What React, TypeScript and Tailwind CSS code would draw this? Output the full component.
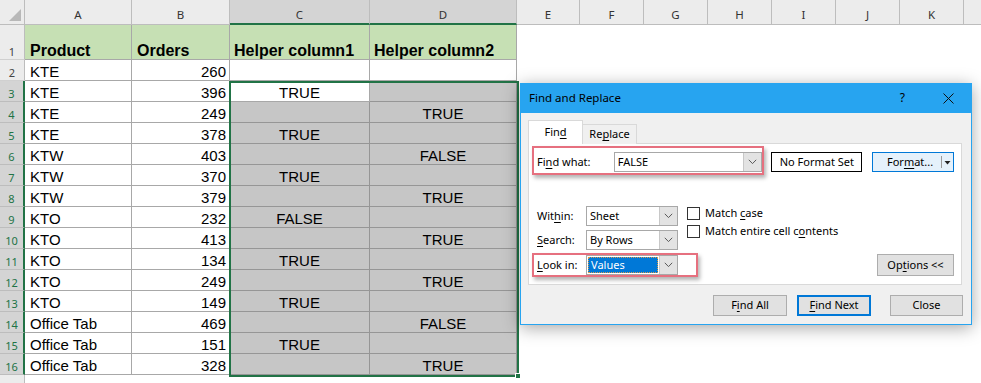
import React from 'react';

type RowData = {
  product: string;
  orders: string;
  h1: string;
  h2: string;
};

const rows: RowData[] = [
  { product: 'KTE', orders: '260', h1: '', h2: '' },
  { product: 'KTE', orders: '396', h1: 'TRUE', h2: '' },
  { product: 'KTE', orders: '249', h1: '', h2: 'TRUE' },
  { product: 'KTE', orders: '378', h1: 'TRUE', h2: '' },
  { product: 'KTW', orders: '403', h1: '', h2: 'FALSE' },
  { product: 'KTW', orders: '370', h1: 'TRUE', h2: '' },
  { product: 'KTW', orders: '379', h1: '', h2: 'TRUE' },
  { product: 'KTO', orders: '232', h1: 'FALSE', h2: '' },
  { product: 'KTO', orders: '413', h1: '', h2: 'TRUE' },
  { product: 'KTO', orders: '134', h1: 'TRUE', h2: '' },
  { product: 'KTO', orders: '249', h1: '', h2: 'TRUE' },
  { product: 'KTO', orders: '149', h1: 'TRUE', h2: '' },
  { product: 'Office Tab', orders: '469', h1: '', h2: 'FALSE' },
  { product: 'Office Tab', orders: '151', h1: 'TRUE', h2: '' },
  { product: 'Office Tab', orders: '328', h1: '', h2: 'TRUE' },
];

const colHeads = [
  { label: 'A', w: 'w-[107px]', sel: false },
  { label: 'B', w: 'w-[98px]', sel: false },
  { label: 'C', w: 'w-[140px]', sel: true },
  { label: 'D', w: 'w-[147px]', sel: true },
  { label: 'E', w: 'w-[63px]', sel: false },
  { label: 'F', w: 'w-[64px]', sel: false },
  { label: 'G', w: 'w-[64px]', sel: false },
  { label: 'H', w: 'w-[64px]', sel: false },
  { label: 'I', w: 'w-[64px]', sel: false },
  { label: 'J', w: 'w-[64px]', sel: false },
  { label: 'K', w: 'w-[64px]', sel: false },
];

const Key = ({ children }: { children: React.ReactNode }) => (
  <span className="underline underline-offset-[2px] decoration-1">{children}</span>
);

const RowHead = ({ n, sel }: { n: number | string; sel: boolean }) => (
  <div
    className={
      sel
        ? 'w-[25px] shrink-0 bg-[#d4d4d4] border-r-2 border-r-[#217346] border-b border-b-[#bdbdbd] text-center text-[#217346] text-[11px] leading-[25px] font-["Noto_Sans",sans-serif]'
        : 'w-[25px] shrink-0 bg-[#ececec] border-r border-r-[#bdbdbd] border-b border-b-[#d0d0d0] text-center text-[#444] text-[11px] leading-[25px] font-["Noto_Sans",sans-serif]'
    }
  >
    {n}
  </div>
);

const Chevron = () => (
  <svg width="9" height="6" viewBox="0 0 9 6">
    <polyline points="0.8,0.8 4.5,4.6 8.2,0.8" fill="none" stroke="#5a5a5a" strokeWidth="1" />
  </svg>
);

const Combo = ({ w, children }: { w: string; children: React.ReactNode }) => (
  <div className={`flex h-[20px] border border-[#a8a8a8] bg-white ${w}`}>
    <div className="flex-1 flex items-center min-w-0">{children}</div>
    <div className="w-[18px] bg-[#e3e3e3] border-l border-[#c8c8c8] flex items-center justify-center">
      <Chevron />
    </div>
  </div>
);

const Check = ({ children }: { children: React.ReactNode }) => (
  <div className="flex items-center h-[18px]">
    <div className="w-[13px] h-[13px] border border-[#333] bg-white" />
    <span className="ml-[5px]">{children}</span>
  </div>
);

const Btn = ({ w, children, focus }: { w: string; children: React.ReactNode; focus?: boolean }) => (
  <div
    className={
      focus
        ? `${w} h-[21px] bg-[#e1e1e1] border-2 border-[#0078d7] flex items-center justify-center`
        : `${w} h-[21px] bg-[#e1e1e1] border border-[#adadad] flex items-center justify-center`
    }
  >
    {children}
  </div>
);

function FindReplaceDialog() {
  return (
    <div className="absolute left-[520px] top-[83px] w-[452px] h-[242px] flex flex-col shadow-[0_3px_16px_rgba(0,0,0,0.35)] font-['Noto_Sans',sans-serif] text-[11px] text-black">
      {/* Title bar */}
      <div className="h-[30px] bg-[#27a4f0] flex items-center pl-[9px] pr-[18px]">
        <span className="text-[11.5px]">Find and Replace</span>
        <span className="ml-auto text-[12px] mr-[38px]">?</span>
        <svg width="11" height="11" viewBox="0 0 11 11">
          <path d="M0.5 0.5 L10.5 10.5 M10.5 0.5 L0.5 10.5" stroke="#111" strokeWidth="1" />
        </svg>
      </div>

      <div className="flex-1 bg-[#f0f0f0] border-x border-b border-[#27a4f0] px-[7px] pt-[8px]">
        {/* Tabs */}
        <div className="flex items-end h-[23px] relative z-10 -mb-px">
          <div className="w-[55px] h-[24px] bg-white border border-b-0 border-[#d9d9d9] flex items-center justify-center pb-[1px]">
            Fin<Key>d</Key>
          </div>
          <div className="w-[54px] h-[20px] bg-[#f0f0f0] border border-l-0 border-b-0 border-[#d9d9d9] flex items-center justify-center">
            Re<Key>p</Key>lace
          </div>
        </div>

        {/* Panel */}
        <div className="w-[434px] h-[142px] bg-white border border-[#d9d9d9] pl-[8px] pt-[8px] pr-[7px]">
          <div className="flex items-center h-[20px]">
            <div className="w-[77px]">
              Fi<Key>n</Key>d what:
            </div>
            <Combo w="w-[149px]">
              <span className="pl-[3px]">FALSE</span>
            </Combo>
            <div className="ml-[9px] w-[91px] h-[20px] border border-black bg-white flex items-center justify-center">
              No Format Set
            </div>
            <div className="ml-[10px] w-[82px] h-[20px] border border-[#0078d7] bg-[#e5f1fb] flex items-center">
              <span className="flex-1 text-center pl-[6px]">
                For<Key>m</Key>at...
              </span>
              <div className="w-px h-[12px] bg-[#9a9a9a]" />
              <svg width="9" height="9" viewBox="0 0 9 9" className="mx-[1px]">
                <polygon points="1.5,3 7.5,3 4.5,6.5" fill="#222" />
              </svg>
            </div>
          </div>

          <div className="flex items-end mt-[34px]">
            <div className="flex flex-col">
              <div className="flex items-center h-[20px]">
                <div className="w-[49px]">
                  Wit<Key>h</Key>in:
                </div>
                <Combo w="w-[92px]">
                  <span className="pl-[3px]">Sheet</span>
                </Combo>
              </div>
              <div className="flex items-center h-[20px] mt-[4px]">
                <div className="w-[49px]">
                  <Key>S</Key>earch:
                </div>
                <Combo w="w-[92px]">
                  <span className="pl-[3px]">By Rows</span>
                </Combo>
              </div>
              <div className="flex items-center h-[20px] mt-[5px]">
                <div className="w-[49px]">
                  <Key>L</Key>ook in:
                </div>
                <Combo w="w-[92px]">
                  <span className="flex-1 mx-px h-[16px] bg-[#0078d7] text-white border border-dotted border-[#d89a4a] flex items-center pl-[2px]">
                    Values
                  </span>
                </Combo>
              </div>
            </div>

            <div className="ml-[9px] self-start flex flex-col -mt-[2px]">
              <Check>
                Match <Key>c</Key>ase
              </Check>
              <Check>
                Match entire cell c<Key>o</Key>ntents
              </Check>
            </div>

            <div className="ml-auto w-[77px] h-[22px] bg-[#e1e1e1] border border-[#adadad] flex items-center justify-center mb-[-1px]">
              Op<Key>t</Key>ions &lt;&lt;
            </div>
          </div>
        </div>

        {/* Bottom buttons */}
        <div className="flex justify-end mt-[10px] pr-px">
          <Btn w="w-[74px]">
            F<Key>i</Key>nd All
          </Btn>
          <div className="ml-[10px]">
            <Btn w="w-[74px]" focus>
              <Key>F</Key>ind Next
            </Btn>
          </div>
          <div className="ml-[19px]">
            <Btn w="w-[73px]">Close</Btn>
          </div>
        </div>
      </div>
    </div>
  );
}

export default function App() {
  const cellBase = 'shrink-0 border-r border-b h-[21px] leading-[24px] overflow-hidden whitespace-nowrap';

  return (
    <div className="relative w-[981px] h-[383px] overflow-hidden bg-white font-['Liberation_Sans',Arial,sans-serif] text-[15px] text-black">
      {/* Column headers */}
      <div className="flex h-[25px]">
        <div className="w-[25px] shrink-0 bg-[#ececec] border-r border-b border-[#bdbdbd] relative">
          <svg width="12" height="12" viewBox="0 0 12 12" className="absolute right-[3px] bottom-[3px]">
            <polygon points="12,0 12,12 0,12" fill="#b8b8b8" />
          </svg>
        </div>
        {colHeads.map((c) => (
          <div
            key={c.label}
            className={
              c.sel
                ? `${c.w} shrink-0 bg-[#d4d4d4] border-r border-r-[#bdbdbd] border-b-2 border-b-[#217346] text-center text-[11.5px] leading-[29px] text-[#333] font-['Noto_Sans',sans-serif]`
                : `${c.w} shrink-0 bg-[#ececec] border-r border-r-[#bdbdbd] border-b border-b-[#bdbdbd] text-center text-[11.5px] leading-[29px] text-[#333] font-['Noto_Sans',sans-serif]`
            }
          >
            {c.label}
          </div>
        ))}
        <div className="flex-1 bg-[#ececec] border-b border-[#bdbdbd]" />
      </div>

      {/* Row 1: headings */}
      <div className="flex h-[35px]">
        <div className="w-[25px] shrink-0 bg-[#ececec] border-r border-r-[#bdbdbd] border-b border-b-[#d0d0d0] text-center text-[#444] text-[11px] leading-[54px] font-['Noto_Sans',sans-serif]">
          1
        </div>
        <div className="w-[107px] shrink-0 bg-[#c6e0b4] border-r border-b border-[#a8a8a8] pl-[5px] font-bold text-[16px] leading-[51px] whitespace-nowrap">
          Product
        </div>
        <div className="w-[98px] shrink-0 bg-[#c6e0b4] border-r border-b border-[#a8a8a8] pl-[5px] font-bold text-[16px] leading-[51px] whitespace-nowrap">
          Orders
        </div>
        <div className="w-[140px] shrink-0 bg-[#c6e0b4] border-r border-b border-[#a8a8a8] pl-[4px] font-bold text-[16px] leading-[51px] whitespace-nowrap">
          Helper column1
        </div>
        <div className="w-[147px] shrink-0 bg-[#c6e0b4] border-r border-b border-[#a8a8a8] pl-[4px] font-bold text-[16px] leading-[51px] whitespace-nowrap">
          Helper column2
        </div>
      </div>

      {/* Data rows */}
      {rows.map((r, i) => {
        const rowNo = i + 2;
        const inSel = rowNo >= 3;
        const active = rowNo === 3;
        return (
          <div key={rowNo} className="flex h-[21px]">
            <RowHead n={rowNo} sel={inSel} />
            <div className={`${cellBase} w-[107px] border-[#a8a8a8] pl-[5px]`}>{r.product}</div>
            <div className={`${cellBase} w-[98px] border-[#a8a8a8] text-right pr-[3px]`}>{r.orders}</div>
            <div
              className={
                inSel && !active
                  ? `${cellBase} w-[140px] bg-[#c6c6c6] border-[#969696] text-center`
                  : `${cellBase} w-[140px] bg-white border-[#a8a8a8] text-center`
              }
            >
              {r.h1}
            </div>
            <div
              className={
                inSel
                  ? `${cellBase} w-[147px] bg-[#c6c6c6] border-[#969696] text-center`
                  : `${cellBase} w-[147px] bg-white border-[#a8a8a8] text-center`
              }
            >
              {r.h2}
            </div>
          </div>
        );
      })}
      <div className="flex h-[21px]">
        <RowHead n="" sel={false} />
      </div>

      {/* Selection outline C3:D16 */}
      <div className="absolute left-[229px] top-[81px] w-[290px] h-[296px] border-2 border-[#217346] pointer-events-none">
        <div className="absolute -right-[4px] -bottom-[4px] w-[6px] h-[6px] bg-[#217346] border border-white" />
      </div>

      <FindReplaceDialog />

      {/* Red annotation boxes */}
      <div className="absolute left-[532px] top-[146px] w-[232px] h-[29px] border-2 border-[#e6707f] shadow-[2px_3px_4px_rgba(0,0,0,0.3)]" />
      <div className="absolute left-[532px] top-[253px] w-[166px] h-[24px] border-2 border-[#e6707f] shadow-[2px_3px_4px_rgba(0,0,0,0.3)]" />
    </div>
  );
}
